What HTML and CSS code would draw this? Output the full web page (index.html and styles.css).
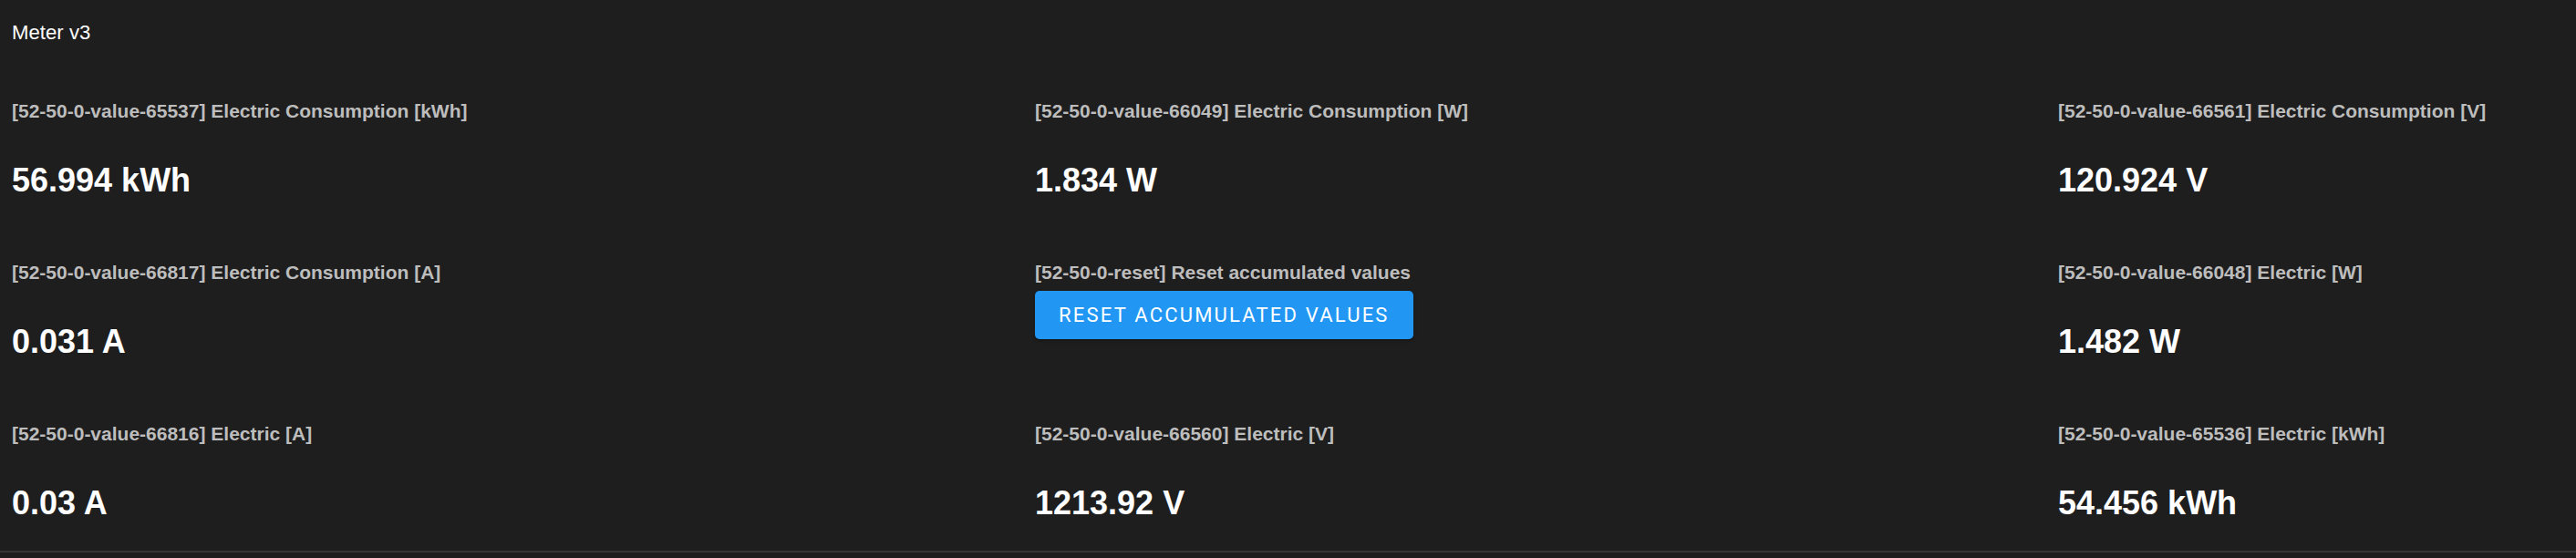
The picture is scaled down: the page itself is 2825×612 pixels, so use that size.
FILE: index.html
```html
<!DOCTYPE html>
<html lang="en">
<head>
    <meta charset="UTF-8">
    <meta name="viewport" content="width=device-width, initial-scale=1.0">
    <title>Meter v3</title>
    <link rel="stylesheet" href="styles.css">
</head>
<body>
    <div class="device">
        <div class="device-title">Meter v3</div>
        <div class="value-grid">
            <div class="value-item">
                <div class="value-label">[52-50-0-value-65537] Electric Consumption [kWh]</div>
                <div class="value-reading">56.994 kWh</div>
            </div>
            <div class="value-item">
                <div class="value-label">[52-50-0-value-66049] Electric Consumption [W]</div>
                <div class="value-reading">1.834 W</div>
            </div>
            <div class="value-item">
                <div class="value-label">[52-50-0-value-66561] Electric Consumption [V]</div>
                <div class="value-reading">120.924 V</div>
            </div>
            <div class="value-item">
                <div class="value-label">[52-50-0-value-66817] Electric Consumption [A]</div>
                <div class="value-reading">0.031 A</div>
            </div>
            <div class="value-item">
                <div class="value-label">[52-50-0-reset] Reset accumulated values</div>
                <button class="action-button">RESET ACCUMULATED VALUES</button>
            </div>
            <div class="value-item">
                <div class="value-label">[52-50-0-value-66048] Electric [W]</div>
                <div class="value-reading">1.482 W</div>
            </div>
            <div class="value-item">
                <div class="value-label">[52-50-0-value-66816] Electric [A]</div>
                <div class="value-reading">0.03 A</div>
            </div>
            <div class="value-item">
                <div class="value-label">[52-50-0-value-66560] Electric [V]</div>
                <div class="value-reading">1213.92 V</div>
            </div>
            <div class="value-item">
                <div class="value-label">[52-50-0-value-65536] Electric [kWh]</div>
                <div class="value-reading">54.456 kWh</div>
            </div>
        </div>
    </div>
</body>
</html>
```

FILE: styles.css
```css
body {
    margin: 0;
    background-color: #1e1e1e;
    color: #ffffff;
    font-family: 'Liberation Sans', Arial, sans-serif;
    overflow: hidden;
}

.device {
    padding: 23px 0 32px 13px;
    border-bottom: 2px solid #363636;
}

.device-title {
    font-size: 22.2px;
    line-height: 26px;
}

.value-grid {
    display: grid;
    grid-template-columns: 1122px 1122px 1fr;
    grid-auto-rows: 108px;
    row-gap: 69px;
    margin-top: 61px;
}

.value-label {
    font-size: 21px;
    line-height: 24px;
    font-weight: bold;
    color: #bdbdbd;
    white-space: nowrap;
}

.value-reading {
    margin-top: 44px;
    font-size: 36px;
    line-height: 40px;
    font-weight: bold;
}

.action-button {
    display: inline-flex;
    align-items: center;
    height: 53px;
    margin-top: 8px;
    padding: 0 26px;
    border: none;
    border-radius: 5px;
    background: #2196f3;
    color: #ffffff;
    font-family: Roboto, 'Liberation Sans', sans-serif;
    font-size: 22px;
    font-weight: 400;
    letter-spacing: 2.2px;
    box-shadow: 0 3px 1px -2px rgba(0, 0, 0, 0.2), 0 2px 2px 0 rgba(0, 0, 0, 0.14), 0 1px 5px 0 rgba(0, 0, 0, 0.12);
    cursor: pointer;
}
```
